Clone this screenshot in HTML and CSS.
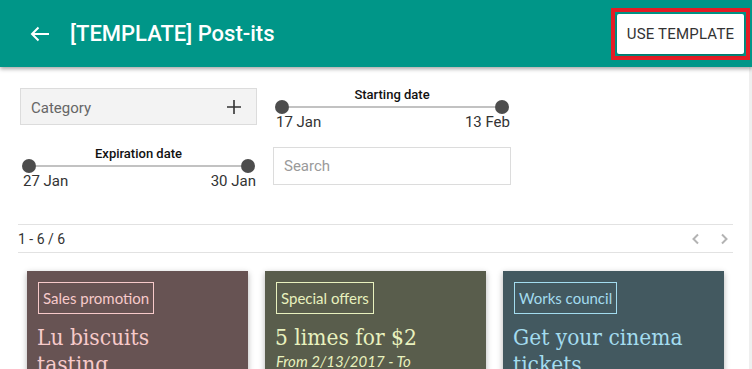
FILE: index.html
```html
<!DOCTYPE html>
<html>
<head>
<meta charset="utf-8">
<link rel="stylesheet" href="styles.css">
</head>
<body>
<header class="appbar">
  <svg class="back" width="20" height="16" viewBox="0 0 20 16"><path d="M19 8H2.5M8.5 1.5L2 8l6.5 6.5" fill="none" stroke="#fff" stroke-width="2"/></svg>
  <h1 class="title">[TEMPLATE] Post-its</h1>
  <div class="spacer"></div>
  <div class="highlight"><button class="use">USE TEMPLATE</button></div>
</header>
<div class="page">
  <main class="content">
    <section class="filters">
      <div class="field category"><span>Category</span>
        <svg width="16" height="16" viewBox="0 0 16 16"><path d="M8 1v14M1 8h14" stroke="#333" stroke-width="1.6"/></svg>
      </div>
      <div class="slider">
        <div class="slider-label">Starting date</div>
        <div class="track"><span class="knob"></span><span class="line"></span><span class="knob"></span></div>
        <div class="dates"><span>17 Jan</span><span>13 Feb</span></div>
      </div>
      <div class="slider">
        <div class="slider-label">Expiration date</div>
        <div class="track"><span class="knob"></span><span class="line"></span><span class="knob"></span></div>
        <div class="dates"><span>27 Jan</span><span>30 Jan</span></div>
      </div>
      <div class="field search"><span>Search</span></div>
    </section>
    <div class="pager">
      <span class="count">1 - 6 / 6</span>
      <div class="arrows">
        <svg width="10" height="12" viewBox="0 0 10 12"><path d="M7 1.5L2.5 6 7 10.5" fill="none" stroke="#b3b3b3" stroke-width="2"/></svg>
        <svg width="10" height="12" viewBox="0 0 10 12"><path d="M3 1.5L7.5 6 3 10.5" fill="none" stroke="#b3b3b3" stroke-width="2"/></svg>
      </div>
    </div>
    <section class="cards">
      <article class="card pink">
        <div class="tag">Sales promotion</div>
        <h2 class="card-title">Lu biscuits tasting</h2>
      </article>
      <article class="card green">
        <div class="tag">Special offers</div>
        <h2 class="card-title">5 limes for $2</h2>
        <div class="sub">From 2/13/2017 - To</div>
      </article>
      <article class="card blue">
        <div class="tag">Works council</div>
        <h2 class="card-title">Get your cinema tickets</h2>
      </article>
    </section>
  </main>
  <div class="scrollbar"></div>
</div>
</body>
</html>
```
FILE: styles.css
```css
* { box-sizing: border-box; }
html, body { margin: 0; padding: 0; height: 100%; overflow: hidden; background: #fff; }
body { font-family: Roboto, "Liberation Sans", sans-serif; color: #333; }

.appbar {
  position: relative; z-index: 2;
  height: 67px; background: #009688;
  display: flex; align-items: center;
  padding-left: 30px; padding-right: 2px;
  box-shadow: 0 2px 4px rgba(0,0,0,0.35);
}
.back { display: block; }
.title {
  margin: 0 0 0 20px; color: #fff;
  font-size: 22px; font-weight: 500; letter-spacing: 0;
}
.spacer { flex: 1; }
.highlight { border: 4px solid #e41d25; padding: 2px; }
.use {
  display: block; width: 127px; height: 40px;
  background: #fff; border: 0; border-radius: 2px;
  box-shadow: 0 1px 3px rgba(0,0,0,0.3);
  font-family: Roboto, sans-serif; font-size: 15px; letter-spacing: 0.2px; color: #333;
  padding: 0;
}

.page { display: flex; height: calc(100% - 67px); }
.content { flex: 1; overflow: hidden; }
.scrollbar { width: 3px; background: #efefef; }

.filters {
  display: grid; grid-template-columns: 237px 238px;
  column-gap: 16px; row-gap: 15px;
  padding: 20px 0 0 20px; align-items: start;
}
.field {
  height: 38px; border: 1px solid #dcdcdc;
  display: flex; align-items: center; justify-content: space-between;
  padding: 0 14px 0 10px; font-size: 15px; color: #666;
}
.category { background: #f3f3f3; margin-top: 1px; height: 37px; }
.category span { padding-top: 2px; }
.search { background: #fff; color: #9a9a9a; margin-top: 1px; }

.slider { padding: 0 1px; }
.slider-label {
  text-align: center; font-size: 13px; line-height: 15px;
  font-weight: 500; color: #111; margin-bottom: -2px;
}
.track { display: flex; align-items: center; height: 14px; padding: 0 1px; }
.knob { width: 14px; height: 14px; border-radius: 50%; background: #4d4d4d; flex: none; }
.line { flex: 1; height: 2px; background: #c2c2c2; }
.dates {
  display: flex; justify-content: space-between;
  font-size: 15px; line-height: 17px; color: #333; padding: 0 0 0 2px;
}

.pager {
  margin: 34px 16px 0 18px; height: 29px;
  border-top: 1px solid #e2e2e2; border-bottom: 1px solid #e2e2e2;
  display: flex; align-items: center; justify-content: space-between;
}
.count { font-size: 14px; color: #333; }
.arrows { display: flex; gap: 18px; padding-right: 4px; }
.arrows svg { display: block; }

.cards {
  display: grid; grid-template-columns: repeat(3, 221px); column-gap: 17px;
  padding: 18px 0 0 27px;
}
.card {
  height: 140px; padding: 11px 11px;
  box-shadow: 0 2px 6px rgba(0,0,0,0.3);
}
.tag {
  display: inline-block; height: 32px; padding: 0 4px;
  border: 1px solid currentColor;
  font-family: Lato, "Open Sans", sans-serif; font-size: 15px; line-height: 30px;
}
.card-title {
  margin: 10px 0 0 -1px; max-width: 182px;
  font-family: "DejaVu Serif Condensed", "DejaVu Serif", serif; font-stretch: condensed;
  font-size: 22.5px; font-weight: 400; line-height: 27px;
}
.sub {
  font-family: Lato, sans-serif; font-style: italic; font-size: 15px; line-height: 18px;
  margin-top: 1px;
}
.pink { background: #675353; color: #f7caca; }
.green { background: #595d4c; color: #e8f1be; }
.blue { background: #435960; color: #a3dcef; }
```
